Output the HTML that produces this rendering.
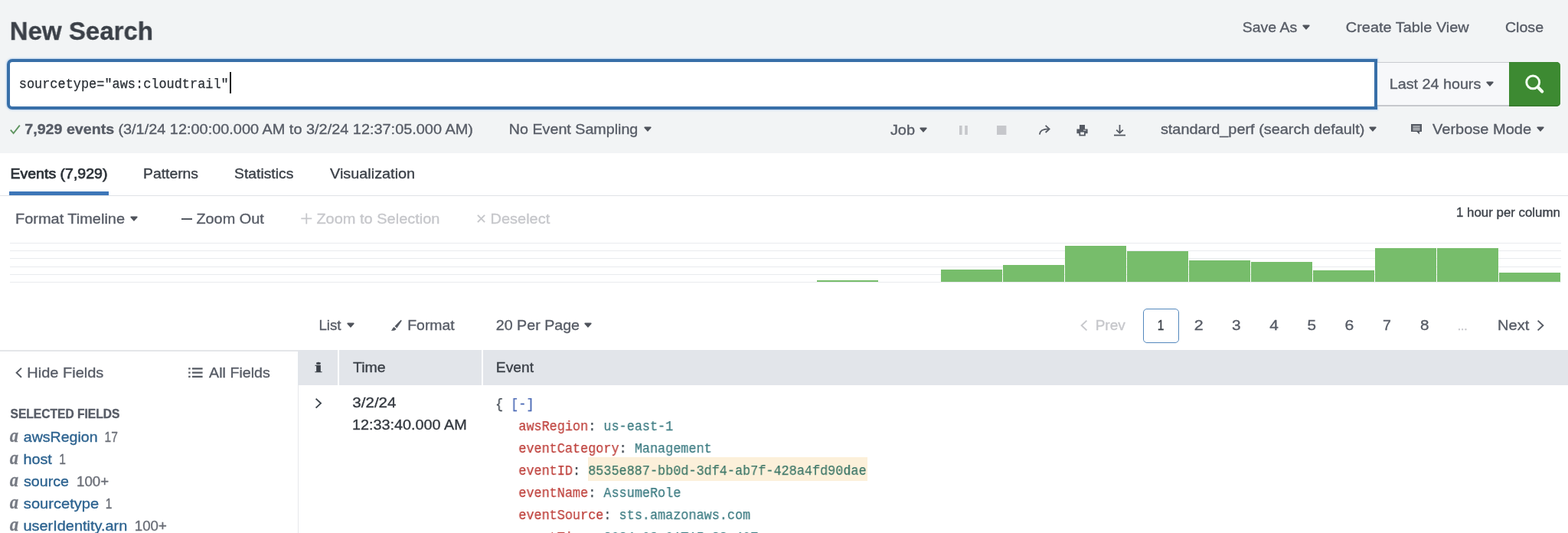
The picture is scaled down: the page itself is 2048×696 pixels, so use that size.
<!DOCTYPE html>
<html lang="en">
<head>
<meta charset="utf-8">
<title>New Search</title>
<style>
*{box-sizing:border-box;margin:0;padding:0}
html,body{width:2048px;height:696px;overflow:hidden;background:#fff}
body{position:relative;font-family:"Liberation Sans",sans-serif;color:#3c444d}
.t{position:absolute;left:0;white-space:pre;line-height:1;transform-origin:0 0;font-weight:normal;display:block;-webkit-text-stroke:0.35px currentColor}
.mono{font-family:"Liberation Mono",monospace;-webkit-text-stroke:0.25px currentColor}
.act{-webkit-text-stroke:0.75px currentColor !important}
.serif{font-family:"Liberation Serif",serif}
.abs{position:absolute}
section,header,nav,aside,main{position:absolute;left:0;top:0;will-change:transform}
svg{position:absolute;overflow:visible}

#topbg{left:0;top:0;width:2048px;height:199.5px;background:#f2f4f5}
#searchbox{left:9px;top:76.5px;width:1790px;height:66.5px;background:#fff;border:4px solid #386fa8;border-radius:7px 0 0 7px;box-shadow:0 0 2px 1px rgba(120,170,230,.45)}
#cursor{left:299.8px;top:94.3px;width:2.4px;height:28px;background:#16181b}
#timerange{left:1799px;top:80.7px;width:172px;height:58.2px;background:#f7f8fa;border-top:1.4px solid #c9cbd0;border-bottom:2.6px solid #c6c8cd}
#go{left:1971px;top:80.8px;width:67.2px;height:58px;background:#3d8a32;border-radius:0 5px 5px 0;box-shadow:inset 0 -1.5px 0 #35782b, inset 0 1px 0 #3a842f}
#tabline{left:0;top:254.6px;width:2048px;height:1.4px;background:#e0e2e6}
#tabact{left:11.6px;top:250px;width:130px;height:4.6px;background:#3d76b8}
.grid{left:13px;width:2026px;height:1px;background:#e9ebee}
.bar{position:absolute;background:#77bd6b}
#sideTop{left:0;top:457.4px;width:390px;height:1.2px;background:#e4e6e9}
#sideRight{left:388.5px;top:457.3px;width:1.2px;height:240px;background:#e6e8eb}
#thead{left:389.2px;top:457.3px;width:1659px;height:46.1px;background:#e2e5ea}
.sep{position:absolute;top:457.3px;width:2.5px;height:46.1px;background:#fff}
#pg1{left:1493.2px;top:402.6px;width:46.4px;height:45.6px;border:1.7px solid #5488bd;border-radius:5px;background:#fff}
#event{position:absolute;left:647.3px;top:0;font-family:"Liberation Mono",monospace;font-size:18.6px;line-height:29px;white-space:pre;transform-origin:0 0;transform:scaleX(0.9048);color:#3c444d;-webkit-text-stroke:0.25px currentColor}
#event div{position:absolute;left:0;height:29px;white-space:pre}
#event .k{color:#bf423d}
#event .v{color:#3f7d84}
#event .g{color:#3f7869}
#event .b{color:#4a68b5}
#hl{left:768.4px;top:596.7px;width:364.6px;height:31.3px;background:#fcf0da}
</style>
</head>
<body>
<div class="abs" id="topbg"></div>

<header>
<h1 class="t" style="top:24px;font-size:33.5px;color:#3b4048;font-weight:bold;transform:matrix(0.9858,0,0,1,12.74,0)">New Search</h1>
<nav>
<span class="t" style="top:26px;font-size:19px;color:#575c66;transform:matrix(1.0254,0,0,1,1622.74,0)">Save As</span>
<span class="t" style="top:26px;font-size:19px;color:#575c66;transform:matrix(1.0480,0,0,1,1757.81,0)">Create Table View</span>
<span class="t" style="top:26px;font-size:19px;color:#575c66;transform:matrix(1.0315,0,0,1,1965.94,0)">Close</span>
<svg class="caret" style="left:1701.00px;top:32.00px" width="10" height="7" viewBox="0 0 10 7"><path d="M1.2 1.4 H8.8 L5 5.8 Z" fill="#50545c" stroke="#50545c" stroke-width="1.7" stroke-linejoin="round"/></svg>
</nav>
</header>

<section id="searchbar">
<div class="abs" id="searchbox"></div>
<span class="t mono" style="top:102px;font-size:18.4px;color:#2b3036;transform:matrix(0.9195,0,0,1,24.77,0)">sourcetype=&quot;aws:cloudtrail&quot;</span>
<div class="abs" id="cursor"></div>
<div class="abs" id="timerange"></div>
<span class="t" style="top:100px;font-size:19px;color:#575c66;transform:matrix(1.0376,0,0,1,1814.83,0)">Last 24 hours</span>
<svg class="caret" style="left:1941.00px;top:105.50px" width="10" height="7" viewBox="0 0 10 7"><path d="M1.2 1.4 H8.8 L5 5.8 Z" fill="#50545c" stroke="#50545c" stroke-width="1.7" stroke-linejoin="round"/></svg>
<div class="abs" id="go"></div>
<svg style="left:1988px;top:94px" width="32" height="32" viewBox="0 0 32 32"><circle cx="14.2" cy="13.4" r="8.4" fill="none" stroke="#f2fff0" stroke-width="3"/><path d="M20.6 19.8 L26.2 25.4" stroke="#f2fff0" stroke-width="4.2" stroke-linecap="round" fill="none"/></svg>
</section>

<section id="status">
<svg style="left:12px;top:160px" width="16" height="16" viewBox="0 0 16 16"><path d="M1.8 9.6 L5.6 14 L13.8 3.6" fill="none" stroke="#5f9560" stroke-width="1.9"/></svg>
<span class="t" style="top:159px;font-size:19px;color:#575c66;font-weight:bold;transform:matrix(1.0352,0,0,1,32.25,0)">7,929 events</span>
<span class="t" style="top:159px;font-size:19px;color:#575c66;transform:matrix(1.0472,0,0,1,154.40,0)">(3/1/24 12:00:00.000 AM to 3/2/24 12:37:05.000 AM)</span>
<span class="t" style="top:159px;font-size:19px;color:#575c66;transform:matrix(1.0358,0,0,1,664.84,0)">No Event Sampling</span>
<svg class="caret" style="left:840.50px;top:165.00px" width="10" height="7" viewBox="0 0 10 7"><path d="M1.2 1.4 H8.8 L5 5.8 Z" fill="#50545c" stroke="#50545c" stroke-width="1.7" stroke-linejoin="round"/></svg>
</section>

<section id="jobbar">
<span class="t" style="top:160px;font-size:19px;color:#575c66;transform:matrix(1.0493,0,0,1,1162.89,0)">Job</span>
<span class="t" style="top:159px;font-size:19px;color:#575c66;transform:matrix(1.0469,0,0,1,1515.90,0)">standard_perf (search default)</span>
<span class="t" style="top:159px;font-size:19px;color:#575c66;transform:matrix(1.0533,0,0,1,1871.06,0)">Verbose Mode</span>
<svg class="caret" style="left:1201.00px;top:166.00px" width="10" height="7" viewBox="0 0 10 7"><path d="M1.2 1.4 H8.8 L5 5.8 Z" fill="#50545c" stroke="#50545c" stroke-width="1.7" stroke-linejoin="round"/></svg>
<svg class="caret" style="left:1788.00px;top:165.00px" width="10" height="7" viewBox="0 0 10 7"><path d="M1.2 1.4 H8.8 L5 5.8 Z" fill="#50545c" stroke="#50545c" stroke-width="1.7" stroke-linejoin="round"/></svg>
<svg class="caret" style="left:2006.50px;top:165.00px" width="10" height="7" viewBox="0 0 10 7"><path d="M1.2 1.4 H8.8 L5 5.8 Z" fill="#50545c" stroke="#50545c" stroke-width="1.7" stroke-linejoin="round"/></svg>
<!-- pause -->
<svg style="left:1253px;top:163.7px" width="11" height="12" viewBox="0 0 11 12"><rect x="0" y="0" width="3.6" height="12" fill="#c6c7cb"/><rect x="7.2" y="0" width="3.6" height="12" fill="#c6c7cb"/></svg>
<!-- stop -->
<svg style="left:1302px;top:163.7px" width="12.4" height="12" viewBox="0 0 12.4 12"><rect x="0" y="0" width="12.4" height="12" fill="#c6c7cb"/></svg>
<!-- share -->
<svg style="left:1356px;top:162px" width="17" height="15" viewBox="0 0 17 15"><path d="M1.8 13.6 C2.2 8.6 5.6 6.4 13.6 6.4" fill="none" stroke="#555a63" stroke-width="1.8"/><path d="M9.6 1.8 L14.6 6.4 L9.6 11" fill="none" stroke="#555a63" stroke-width="1.8"/></svg>
<!-- print -->
<svg style="left:1406px;top:162.5px" width="15" height="15" viewBox="0 0 15 15"><path d="M4 0 H11 V5.4 H14.6 V11.2 H11.8 V14.4 H3.4 V11.2 H0.4 V5.4 H4 Z" fill="#555a63"/><rect x="5.2" y="9.6" width="4.8" height="3.2" fill="#f2f4f5"/><rect x="9" y="6.6" width="3.6" height="1.2" fill="#c9ccd2"/></svg>
<!-- download -->
<svg style="left:1455px;top:163px" width="15" height="15" viewBox="0 0 15 15"><path d="M7.5 0 V10.6 M3.2 6.6 L7.5 10.8 L11.8 6.6" fill="none" stroke="#555a63" stroke-width="1.8"/><path d="M0 13.6 H15" stroke="#555a63" stroke-width="1.8"/></svg>
<!-- verbose -->
<svg style="left:1843px;top:162px" width="14" height="14" viewBox="0 0 14 14"><path d="M0 0 H14 V10 H11 V13.4 L7.4 10 H0 Z" fill="#555a63"/><path d="M2.4 3 H11.6 M2.4 5.4 H11.6 M2.4 7.6 H11.6" stroke="#f2f4f5" stroke-width="1"/></svg>
</section>

<nav id="tabs">
<span class="t act" style="top:217px;font-size:19px;color:#2c3238;transform:matrix(1.0277,0,0,1,13.45,0)">Events (7,929)</span>
<span class="t" style="top:217px;font-size:19px;color:#3b4048;transform:matrix(1.0186,0,0,1,186.97,0)">Patterns</span>
<span class="t" style="top:217px;font-size:19px;color:#3b4048;transform:matrix(1.0163,0,0,1,306.05,0)">Statistics</span>
<span class="t" style="top:217px;font-size:19px;color:#3b4048;transform:matrix(1.0444,0,0,1,431.07,0)">Visualization</span>
<div class="abs" id="tabline"></div>
<div class="abs" id="tabact"></div>
</nav>

<section id="timeline">
<span class="t" style="top:276px;font-size:19px;color:#575c66;transform:matrix(1.0500,0,0,1,20.01,0)">Format Timeline</span>
<span class="t" style="top:276px;font-size:19px;color:#575c66;transform:matrix(1.0460,0,0,1,256.43,0)">Zoom Out</span>
<span class="t" style="top:276px;font-size:19px;color:#c6c7cb;transform:matrix(1.0515,0,0,1,413.42,0)">Zoom to Selection</span>
<span class="t" style="top:276px;font-size:19px;color:#c6c7cb;transform:matrix(1.0520,0,0,1,640.47,0)">Deselect</span>
<span class="t" style="top:269px;font-size:16.5px;color:#3b4048;transform:matrix(1.0216,0,0,1,1902.04,0)">1 hour per column</span>
<svg class="caret" style="left:169.50px;top:282.00px" width="10" height="7" viewBox="0 0 10 7"><path d="M1.2 1.4 H8.8 L5 5.8 Z" fill="#50545c" stroke="#50545c" stroke-width="1.7" stroke-linejoin="round"/></svg>
<div class="abs" style="left:237px;top:284.5px;width:13.8px;height:2px;background:#555a63"></div>
<svg style="left:393px;top:278px" width="15" height="15" viewBox="0 0 15 15"><path d="M7.3 0.4 V14.4 M0.3 7.4 H14.3" stroke="#c6c7cb" stroke-width="1.8" fill="none"/></svg>
<svg style="left:623.2px;top:280.3px" width="11" height="11" viewBox="0 0 11 11"><path d="M0.9 0.9 L10.1 10.1 M10.1 0.9 L0.9 10.1" stroke="#c6c7cb" stroke-width="2" fill="none"/></svg>
<div class="abs grid" style="top:317px"></div>
<div class="abs grid" style="top:327px"></div>
<div class="abs grid" style="top:337.25px"></div>
<div class="abs grid" style="top:347.5px"></div>
<div class="abs grid" style="top:357.75px"></div>
<div class="abs grid" style="top:367.5px"></div>
<div class="bar" style="left:1067.3px;top:365.5px;width:79.7px;height:2.10px"></div>
<div class="bar" style="left:1229.3px;top:351.5px;width:79.7px;height:16.10px"></div>
<div class="bar" style="left:1310.3px;top:345.75px;width:79.7px;height:21.85px"></div>
<div class="bar" style="left:1391.3px;top:321.25px;width:79.7px;height:46.35px"></div>
<div class="bar" style="left:1472.3px;top:328.25px;width:79.7px;height:39.35px"></div>
<div class="bar" style="left:1553.3px;top:340px;width:79.7px;height:27.60px"></div>
<div class="bar" style="left:1634.3px;top:341.5px;width:79.7px;height:26.10px"></div>
<div class="bar" style="left:1715.3px;top:353px;width:79.7px;height:14.60px"></div>
<div class="bar" style="left:1796.3px;top:324.25px;width:79.7px;height:43.35px"></div>
<div class="bar" style="left:1877.3px;top:324.25px;width:79.7px;height:43.35px"></div>
<div class="bar" style="left:1958.3px;top:356px;width:79.7px;height:11.60px"></div>
</section>

<section id="controls">
<span class="t" style="top:415px;font-size:19px;color:#575c66;transform:matrix(0.9836,0,0,1,416.40,0)">List</span>
<span class="t" style="top:415px;font-size:19px;color:#575c66;transform:matrix(1.0222,0,0,1,532.24,0)">Format</span>
<span class="t" style="top:415px;font-size:19px;color:#575c66;transform:matrix(1.0341,0,0,1,647.81,0)">20 Per Page</span>
<svg class="caret" style="left:452.75px;top:421.20px" width="10" height="7" viewBox="0 0 10 7"><path d="M1.2 1.4 H8.8 L5 5.8 Z" fill="#50545c" stroke="#50545c" stroke-width="1.7" stroke-linejoin="round"/></svg>
<svg class="caret" style="left:763.25px;top:421.20px" width="10" height="7" viewBox="0 0 10 7"><path d="M1.2 1.4 H8.8 L5 5.8 Z" fill="#50545c" stroke="#50545c" stroke-width="1.7" stroke-linejoin="round"/></svg>
<svg style="left:510px;top:417px" width="16" height="16" viewBox="0 0 16 16"><path d="M13.3 0.9 Q14.4 0.7 14.7 2 L8.4 11.5 L5.5 9.1 Z" fill="#555a63"/><path d="M4.7 9.9 L7.5 12.4 C7.2 14.3 4.6 15 0.7 14.8 C2.4 13.4 2.7 10.9 4.7 9.9 Z" fill="#555a63"/></svg>
<div class="abs" id="pg1"></div>
<svg style="left:1411px;top:417.6px" width="10" height="14" viewBox="0 0 10 14"><path d="M8.4 0.6 L1.6 7 L8.4 13.4" fill="none" stroke="#c6c7cb" stroke-width="1.9"/></svg>
<span class="t" style="top:415px;font-size:19px;color:#c6c7cb;transform:matrix(0.9997,0,0,1,1430.66,0)">Prev</span>
<span class="t" style="top:415px;font-size:19px;color:#3b4048;transform:matrix(0.8200,0,0,1,1511.66,0)">1</span>
<span class="t" style="top:415px;font-size:19px;color:#575c66;transform:matrix(1.1303,0,0,1,1559.83,0)">2</span>
<span class="t" style="top:415px;font-size:19px;color:#575c66;transform:matrix(1.0910,0,0,1,1609.01,0)">3</span>
<span class="t" style="top:415px;font-size:19px;color:#575c66;transform:matrix(1.0937,0,0,1,1658.26,0)">4</span>
<span class="t" style="top:415px;font-size:19px;color:#575c66;transform:matrix(1.0885,0,0,1,1707.41,0)">5</span>
<span class="t" style="top:415px;font-size:19px;color:#575c66;transform:matrix(1.1103,0,0,1,1756.42,0)">6</span>
<span class="t" style="top:415px;font-size:19px;color:#575c66;transform:matrix(1.0317,0,0,1,1806.12,0)">7</span>
<span class="t" style="top:415px;font-size:19px;color:#575c66;transform:matrix(1.0864,0,0,1,1855.03,0)">8</span>
<span class="t" style="top:418px;font-size:16px;color:#c6c7cb;transform:matrix(0.9722,0,0,1,1903.71,0)">...</span>
<span class="t" style="top:415px;font-size:19px;color:#575c66;transform:matrix(1.0570,0,0,1,1955.98,0)">Next</span>
<svg style="left:2006.6px;top:417.6px" width="10" height="14" viewBox="0 0 10 14"><path d="M1.6 0.6 L8.4 7 L1.6 13.4" fill="none" stroke="#555a63" stroke-width="1.9"/></svg>
</section>

<aside id="sidebar">
<div class="abs" id="sideTop"></div>
<div class="abs" id="sideRight"></div>
<svg style="left:20.4px;top:480px" width="10" height="14" viewBox="0 0 10 14"><path d="M8 0.6 L1.6 6.7 L8 12.8" fill="none" stroke="#555a63" stroke-width="1.9"/></svg>
<svg style="left:246px;top:479.6px" width="19" height="13" viewBox="0 0 19 13"><path d="M5 1.4 H18.6 M5 6.6 H18.6 M5 11.8 H18.6" stroke="#555a63" stroke-width="2.2"/><path d="M0.2 1.4 H2.6 M0.2 6.6 H2.6 M0.2 11.8 H2.6" stroke="#555a63" stroke-width="2.2"/></svg>
<span class="t" style="top:477px;font-size:19px;color:#575c66;transform:matrix(1.0531,0,0,1,35.27,0)">Hide Fields</span>
<span class="t" style="top:477px;font-size:19px;color:#575c66;transform:matrix(1.0356,0,0,1,273.06,0)">All Fields</span>
<h6 class="t" style="top:532px;font-size:16.5px;color:#575c66;font-weight:bold;transform:matrix(0.9448,0,0,1,13.51,0)">SELECTED FIELDS</h6>
<span class="t serif" style="top:556px;font-size:26px;color:#777b84;font-weight:bold;font-style:italic;transform:matrix(0.8648,0,0,1,12.86,0)">a</span>
<span class="t" style="top:561px;font-size:19px;color:#2d6390;transform:matrix(1.0298,0,0,1,30.81,0)">awsRegion</span>
<span class="t" style="top:561px;font-size:19px;color:#696d76;transform:matrix(0.8200,0,0,1,136.50,0)">17</span>
<span class="t serif" style="top:585px;font-size:26px;color:#777b84;font-weight:bold;font-style:italic;transform:matrix(0.8648,0,0,1,12.86,0)">a</span>
<span class="t" style="top:590px;font-size:19px;color:#2d6390;transform:matrix(1.0418,0,0,1,30.40,0)">host</span>
<span class="t" style="top:590px;font-size:19px;color:#696d76;transform:matrix(0.8200,0,0,1,77.31,0)">1</span>
<span class="t serif" style="top:614px;font-size:26px;color:#777b84;font-weight:bold;font-style:italic;transform:matrix(0.8648,0,0,1,12.86,0)">a</span>
<span class="t" style="top:619px;font-size:19px;color:#2d6390;transform:matrix(1.0361,0,0,1,30.93,0)">source</span>
<span class="t" style="top:619px;font-size:19px;color:#696d76;transform:matrix(0.9836,0,0,1,100.04,0)">100+</span>
<span class="t serif" style="top:643px;font-size:26px;color:#777b84;font-weight:bold;font-style:italic;transform:matrix(0.8648,0,0,1,12.86,0)">a</span>
<span class="t" style="top:648px;font-size:19px;color:#2d6390;transform:matrix(1.0579,0,0,1,30.86,0)">sourcetype</span>
<span class="t" style="top:648px;font-size:19px;color:#696d76;transform:matrix(0.8200,0,0,1,137.82,0)">1</span>
<span class="t serif" style="top:672px;font-size:26px;color:#777b84;font-weight:bold;font-style:italic;transform:matrix(0.8791,0,0,1,12.69,0)">a</span>
<span class="t" style="top:677px;font-size:19px;color:#2d6390;transform:matrix(1.0481,0,0,1,30.48,0)">userIdentity.arn</span>
<span class="t" style="top:677px;font-size:19px;color:#696d76;transform:matrix(0.9827,0,0,1,175.80,0)">100+</span>
</aside>

<main id="results">
<div class="abs" id="thead"></div>
<div class="sep" style="left:440.8px"></div>
<div class="sep" style="left:628.8px"></div>
<span class="t serif" style="top:471px;font-size:18.5px;color:#3b4048;font-weight:bold;transform:matrix(1.8838,0,0,1,411.12,0)">i</span>
<span class="t" style="top:470px;font-size:19px;color:#3b4048;transform:matrix(1.0303,0,0,1,460.91,0)">Time</span>
<span class="t" style="top:470px;font-size:19px;color:#3b4048;transform:matrix(1.0125,0,0,1,647.80,0)">Event</span>
<svg style="left:411px;top:519.6px" width="10" height="14" viewBox="0 0 10 14"><path d="M1.6 0.6 L8 6.6 L1.6 12.6" fill="none" stroke="#3c444d" stroke-width="1.9"/></svg>
<span class="t" style="top:516px;font-size:19px;color:#33383f;transform:matrix(1.0823,0,0,1,460.31,0)">3/2/24</span>
<span class="t" style="top:545px;font-size:19px;color:#33383f;transform:matrix(1.0426,0,0,1,459.90,0)">12:33:40.000 AM</span>
<div class="abs" id="hl"></div>
<div id="event"><div style="top:513.8px">{ <span class="b">[-]</span></div><div style="top:542.8px">   <span class="k">awsRegion</span>: <span class="v">us-east-1</span></div><div style="top:571.8px">   <span class="k">eventCategory</span>: <span class="v">Management</span></div><div style="top:600.8px">   <span class="k">eventID</span>: <span class="g">8535e887-bb0d-3df4-ab7f-428a4fd90dae</span></div><div style="top:629.8px">   <span class="k">eventName</span>: <span class="v">AssumeRole</span></div><div style="top:658.8px">   <span class="k">eventSource</span>: <span class="v">sts.amazonaws.com</span></div><div style="top:687.8px">   <span class="k">eventTime</span>: <span class="v">2024-03-01T15:33:40Z</span></div></div>
</main>
</body>
</html>
